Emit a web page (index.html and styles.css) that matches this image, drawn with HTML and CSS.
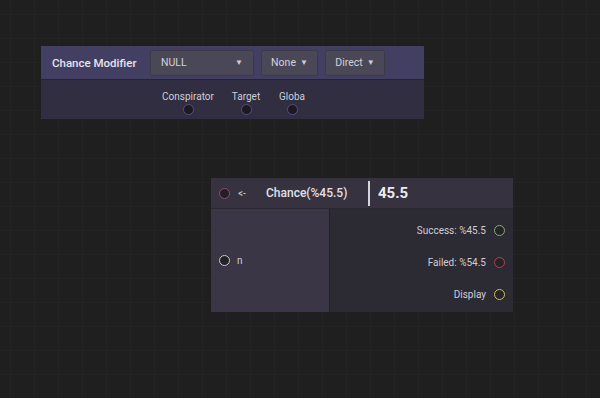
FILE: index.html
```html
<!DOCTYPE html>
<html lang="en">
<head>
  <meta charset="UTF-8" />
  <title>Node Graph</title>
  <link rel="stylesheet" href="styles.css">
</head>
<body>

<div class="canvas">

  <!-- Chance Modifier node -->
  <div class="node modifier">
    <div class="mod-head">
      <span class="mod-title">Chance Modifier</span>
      <div class="drop drop-null"><span>NULL</span><span class="caret">▼</span></div>
      <div class="drop drop-none"><span>None</span><span class="caret">▼</span></div>
      <div class="drop drop-direct"><span>Direct</span><span class="caret">▼</span></div>
    </div>
    <div class="mod-body">
      <div class="port-in">
        <span class="port-label">Conspirator</span>
        <span class="dot purple"></span>
      </div>
      <div class="port-in">
        <span class="port-label">Target</span>
        <span class="dot purple"></span>
      </div>
      <div class="port-in">
        <span class="port-label">Globa</span>
        <span class="dot purple"></span>
      </div>
    </div>
  </div>

  <!-- Chance node -->
  <div class="node chance">
    <div class="ch-head">
      <span class="dot pink"></span>
      <span class="arrow">&lt;-</span>
      <span class="ch-title">Chance(%45.5)</span>
      <div class="ch-value">45.5</div>
    </div>
    <div class="ch-body">
      <div class="ch-left">
        <span class="dot grey"></span>
        <span class="in-label">n</span>
      </div>
      <div class="ch-right">
        <div class="out-row"><span>Success: %45.5</span><span class="dot green"></span></div>
        <div class="out-row"><span>Failed: %54.5</span><span class="dot red"></span></div>
        <div class="out-row"><span>Display</span><span class="dot yellow"></span></div>
      </div>
    </div>
  </div>

</div>

</body>
</html>
```

FILE: styles.css
```css
* {
  box-sizing: border-box;
}
body {
  margin: 0;
  background: #1f1f1f;
  font-family: 'Roboto', 'Liberation Sans', sans-serif;
  color: #d8d6e0;
  overflow: hidden;
}

.canvas {
  position: relative;
  width: 600px;
  height: 398px;
  background-color: #1f1f1f;
  background-image:
    linear-gradient(#232323 1px, transparent 1px),
    linear-gradient(90deg, #232323 1px, transparent 1px);
  background-size: 24px 24px;
  background-position: 10px 14px;
}

.node {
  position: absolute;
}

.dot {
  display: inline-block;
  width: 11px;
  height: 11px;
  border-radius: 50%;
  background: #1b1a1e;
  border: 1.5px solid #6a5a8e;
  flex-shrink: 0;
}
.dot.purple { border-color: #5c4a86; }
.dot.pink { border-color: #8a4e78; background: #222024; }
.dot.grey { border-color: #c9c9cc; background: #232227; }
.dot.green { border-color: #8cab78; background: #262429; }
.dot.red { border-color: #a8474f; background: #262429; }
.dot.yellow { border-color: #c8c365; background: #262429; }

/* modifier node */
.modifier {
  left: 41px;
  top: 46px;
  width: 383px;
}
.mod-head {
  height: 34px;
  background: #433f63;
  display: flex;
  align-items: center;
  padding-left: 11px;
  border-bottom: 1px solid #26242e;
}
.mod-title {
  font-size: 11.5px;
  font-weight: 500;
  color: #e6e4ee;
  width: 98px;
}
.drop {
  height: 26px;
  background: #4a4856;
  border: 1px solid #3c3a48;
  border-radius: 2px;
  display: flex;
  align-items: center;
  font-size: 10.5px;
  color: #d2d0da;
  margin-right: 7px;
}
.drop .caret {
  font-size: 8px;
  margin-left: 4px;
  color: #cfcdd6;
}
.drop-null {
  width: 104px;
  padding: 0 10px;
  justify-content: space-between;
}
.drop-none {
  width: 57px;
  justify-content: center;
}
.drop-direct {
  width: 60px;
  justify-content: center;
}
.mod-body {
  height: 39px;
  background: #302e40;
  display: flex;
  padding-left: 118px;
}
.port-in {
  display: flex;
  flex-direction: column;
  align-items: center;
  padding-top: 11px;
}
.port-in:nth-child(1) { width: 58px; }
.port-in:nth-child(2) { width: 58px; }
.port-in:nth-child(3) { width: 32px; margin-left: 1px; }
.port-label {
  font-size: 10px;
  color: #cfcdd6;
  line-height: 12px;
  margin-bottom: 1px;
}

/* chance node */
.chance {
  left: 211px;
  top: 178px;
  width: 302px;
}
.ch-head {
  height: 31px;
  background: #37323f;
  display: flex;
  align-items: center;
  padding-left: 8px;
  border-bottom: 1px solid #2a2830;
}
.arrow {
  font-size: 10px;
  color: #cfcdd6;
  margin-left: 8px;
  width: 28px;
}
.ch-title {
  font-size: 12px;
  font-weight: 500;
  color: #e2e0e8;
  width: 102px;
}
.ch-value {
  height: 25px;
  border-left: 2px solid #d6d4dc;
  padding-left: 8px;
  font-size: 15px;
  font-weight: 700;
  color: #ecebf0;
  display: flex;
  align-items: center;
}
.ch-body {
  display: flex;
  height: 103px;
}
.ch-left {
  width: 119px;
  background: #3a3646;
  border-right: 1px solid #232128;
  display: flex;
  align-items: center;
  padding-left: 8px;
  gap: 7px;
}
.in-label {
  font-size: 10px;
  color: #cfcdd6;
}
.ch-right {
  flex: 1;
  background: #2c2a32;
  display: flex;
  flex-direction: column;
  align-items: flex-end;
  padding: 16px 8px 0 0;
  gap: 21px;
}
.out-row {
  display: flex;
  align-items: center;
  gap: 8px;
  font-size: 10px;
  color: #cfcdd6;
  height: 11px;
}
```
